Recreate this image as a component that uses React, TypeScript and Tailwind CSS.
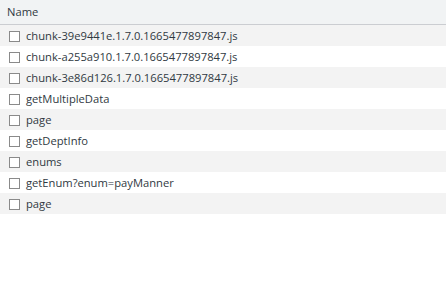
import React from "react";

const rows = [
  "chunk-39e9441e.1.7.0.1665477897847.js",
  "chunk-a255a910.1.7.0.1665477897847.js",
  "chunk-3e86d126.1.7.0.1665477897847.js",
  "getMultipleData",
  "page",
  "getDeptInfo",
  "enums",
  "getEnum?enum=payManner",
  "page",
];

const App: React.FC = () => {
  return (
    <div className="w-[446px] h-[306px] bg-white text-[11.2px] text-[#303942] font-['Open_Sans',sans-serif]">
      <div className="h-[25px] flex items-center px-[7px] bg-[#f1f3f4] border-b border-[#cbcdd1]">
        Name
      </div>
      <ul>
        {rows.map((name, idx) => (
          <li
            key={idx}
            className={
              "h-[21px] flex items-center pl-[9px] pt-[2px] " +
              (idx % 2 === 0 ? "bg-[#f3f3f3]" : "bg-white")
            }
          >
            <span className="w-[11px] h-[11px] border border-[#8a8a8a] bg-white shrink-0" />
            <span className="ml-[6px] whitespace-nowrap">{name}</span>
          </li>
        ))}
      </ul>
    </div>
  );
};

export default App;
